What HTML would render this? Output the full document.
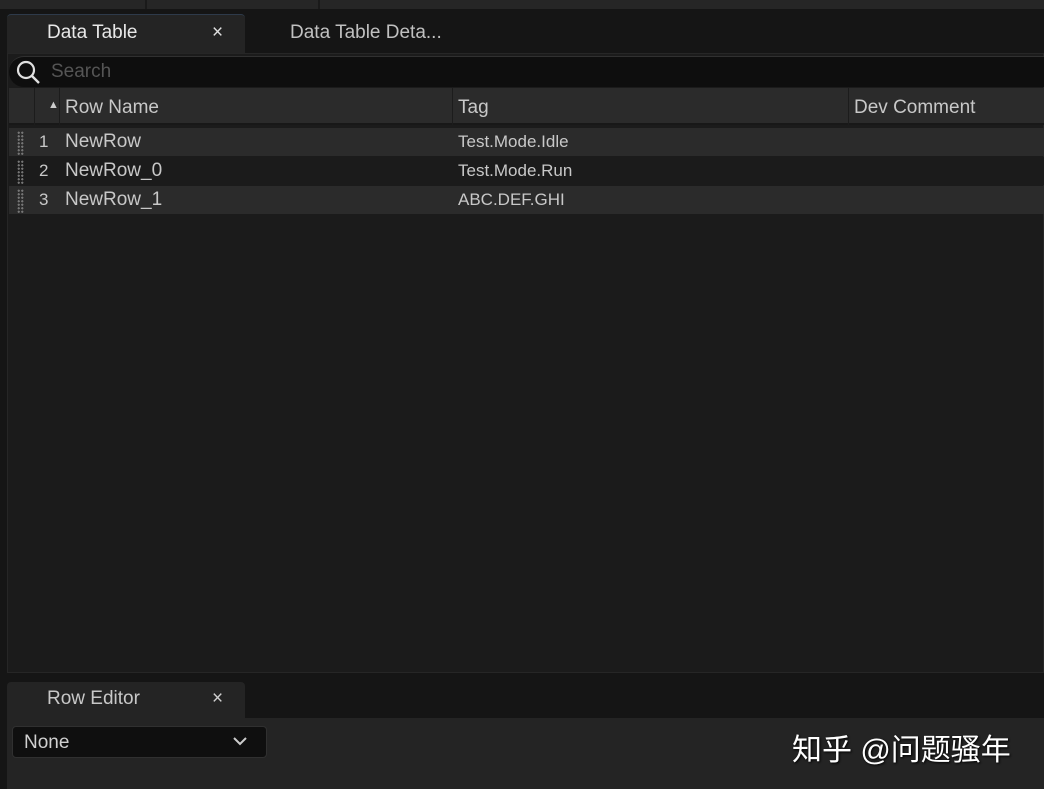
<!DOCTYPE html>
<html><head><meta charset="utf-8"><style>
*{margin:0;padding:0;box-sizing:border-box}
body{width:1044px;height:789px;background:#151515;position:relative;overflow:hidden;font-family:"Liberation Sans","Noto Sans CJK SC",sans-serif;color:#c8c8c8}
.a{position:absolute}
</style></head><body>
<div class="a" style="left:0;top:0;width:1044px;height:9px;background:#262626"></div>
<div class="a" style="left:145px;top:0;width:2px;height:9px;background:#1a1a1a"></div>
<div class="a" style="left:318px;top:0;width:2px;height:9px;background:#1a1a1a"></div>
<div class="a" style="left:7px;top:14px;width:238px;height:40px;background:#242424;border-radius:4px 4px 0 0;border-top:1px solid #2e3a4a"></div>
<div class="a" style="left:47px;top:22px;font-size:19px;color:#e8e8e8">Data Table</div>
<div class="a" style="left:212px;top:22px;font-size:19px;color:#e0e0e0">×</div>
<div class="a" style="left:290px;top:22px;font-size:19px;color:#c0c0c0">Data Table Deta...</div>
<div class="a" style="left:7px;top:53px;width:1037px;height:620px;background:#1b1b1b;border:1px solid #262626"></div>
<div class="a" style="left:9px;top:56px;width:1035px;height:31px;background:#0e0e0e;border-radius:15px 0 0 15px;border-top:1px solid #303030"></div>
<svg class="a" style="left:14px;top:58px" width="28" height="28" viewBox="0 0 28 28"><circle cx="12" cy="12" r="8" fill="none" stroke="#e0e0e0" stroke-width="2.2"/><line x1="18" y1="18" x2="25" y2="25" stroke="#e0e0e0" stroke-width="2.4"/></svg>
<div class="a" style="left:51px;top:61px;font-size:19px;color:#555">Search</div>
<div class="a" style="left:9px;top:88px;width:1035px;height:37px;background:#2b2b2b;border-bottom:2px solid #181818"></div>
<div class="a" style="left:34px;top:88px;width:1px;height:37px;background:#1c1c1c"></div>
<div class="a" style="left:59px;top:88px;width:1px;height:37px;background:#1c1c1c"></div>
<div class="a" style="left:452px;top:88px;width:1px;height:37px;background:#1c1c1c"></div>
<div class="a" style="left:848px;top:88px;width:1px;height:37px;background:#1c1c1c"></div>
<div class="a" style="left:48px;top:99px;font-size:11px;color:#ccc">▲</div>
<div class="a" style="left:65px;top:97px;font-size:19px">Row Name</div>
<div class="a" style="left:458px;top:97px;font-size:19px">Tag</div>
<div class="a" style="left:854px;top:97px;font-size:19px">Dev Comment</div>
<div class="a" style="left:9px;top:128px;width:1035px;height:28px;background:#2b2b2b"></div>
<div class="a" style="left:9px;top:157px;width:1035px;height:28px;background:#1b1b1b"></div>
<div class="a" style="left:9px;top:186px;width:1035px;height:28px;background:#2b2b2b"></div>
<div class="a" style="left:17px;top:131px;width:7px;height:24px;background:radial-gradient(circle,#777 1px,transparent 1.2px) 0 0/3.5px 3.5px"></div>
<div class="a" style="left:17px;top:160px;width:7px;height:24px;background:radial-gradient(circle,#777 1px,transparent 1.2px) 0 0/3.5px 3.5px"></div>
<div class="a" style="left:17px;top:189px;width:7px;height:24px;background:radial-gradient(circle,#777 1px,transparent 1.2px) 0 0/3.5px 3.5px"></div>
<div class="a" style="left:39px;top:132px;font-size:17px">1</div>
<div class="a" style="left:39px;top:161px;font-size:17px">2</div>
<div class="a" style="left:39px;top:190px;font-size:17px">3</div>
<div class="a" style="left:65px;top:131px;font-size:19px">NewRow</div>
<div class="a" style="left:65px;top:160px;font-size:19px">NewRow_0</div>
<div class="a" style="left:65px;top:189px;font-size:19px">NewRow_1</div>
<div class="a" style="left:458px;top:132px;font-size:17px">Test.Mode.Idle</div>
<div class="a" style="left:458px;top:161px;font-size:17px">Test.Mode.Run</div>
<div class="a" style="left:458px;top:190px;font-size:17px">ABC.DEF.GHI</div>
<div class="a" style="left:7px;top:682px;width:238px;height:36px;background:#242424;border-radius:4px 4px 0 0"></div>
<div class="a" style="left:47px;top:688px;font-size:19px;color:#c8c8c8">Row Editor</div>
<div class="a" style="left:212px;top:688px;font-size:19px;color:#d0d0d0">×</div>
<div class="a" style="left:7px;top:718px;width:1037px;height:71px;background:#242424"></div>
<div class="a" style="left:12px;top:726px;width:255px;height:32px;background:#0f0f0f;border:1px solid #303030;border-radius:4px"></div>
<div class="a" style="left:24px;top:732px;font-size:19px;color:#d0d0d0">None</div>
<svg class="a" style="left:232px;top:735px" width="16" height="12" viewBox="0 0 16 12"><path d="M2 3 L8 9 L14 3" fill="none" stroke="#ccc" stroke-width="2"/></svg>
<div class="a" style="left:792px;top:725px;font-size:30px;color:#fff;text-shadow:1px 1px 2px #000">知乎 @问题骚年</div>
</body></html>
